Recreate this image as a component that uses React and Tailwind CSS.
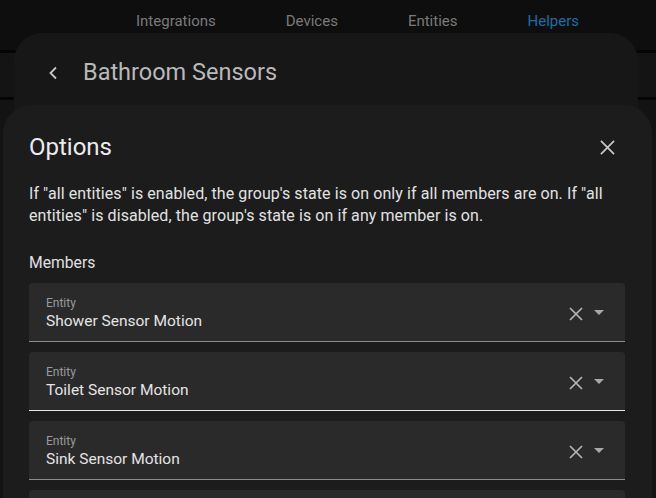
import React from "react";

const members = ["Shower Sensor Motion", "Toilet Sensor Motion", "Sink Sensor Motion"];

function EntityField({ value, active }) {
  return (
    <div
      className={`h-[59px] rounded-t-[4px] bg-[#2a2a2a] flex items-center pl-[17px] pr-[21px] border-b ${
        active ? "border-[#e8e8e8]" : "border-[#8d8d8d]"
      }`}
    >
      <div className="flex-1 flex flex-col pt-[2px]">
        <span className="text-[12px] leading-[14px] text-[#9a9a9a]">Entity</span>
        <span className="text-[15.5px] leading-[20px] text-[#e4e4e4] mt-[1px]">{value}</span>
      </div>
      <svg width="14" height="14" viewBox="0 0 14 14" className="mr-[11px] mt-[3px]">
        <path d="M1 1 L13 13 M13 1 L1 13" stroke="#b5b5b5" strokeWidth="1.7" />
      </svg>
      <svg width="10" height="5" viewBox="0 0 10 5" className="mt-[1px]">
        <path d="M0 0 L10 0 L5 5 Z" fill="#a8a8a8" />
      </svg>
    </div>
  );
}

export default function App() {
  return (
    <div className="relative w-[656px] h-[498px] overflow-hidden bg-[#131313] font-['Roboto',sans-serif]">
      {/* page behind */}
      <div className="h-[50px] bg-[#0e0e0e] flex items-start pt-[10px] text-[15px] text-[#7a7a7a]">
        <span className="ml-[136px]">Integrations</span>
        <span className="ml-[70px]">Devices</span>
        <span className="ml-[70px]">Entities</span>
        <span className="ml-[70px] text-[#1a6ea6]">Helpers</span>
      </div>
      <div className="h-[3px] bg-[#050505]" />
      <div className="h-[44px] bg-[#141414]" />
      <div className="h-[3px] bg-[#050505]" />

      {/* group dialog */}
      <div className="absolute left-[14px] right-[18px] top-[33px] bottom-0 rounded-t-[28px] bg-[#171717]">
        <div className="flex items-center h-[78px] pl-[34px] pt-[2px]">
          <svg width="10" height="14" viewBox="0 0 10 14">
            <path d="M8 1.5 L2.5 7 L8 12.5" stroke="#c8c8c8" strokeWidth="1.8" fill="none" />
          </svg>
          <span className="ml-[25px] text-[23.5px] text-[#b9b9b9]">Bathroom Sensors</span>
        </div>
      </div>

      {/* options dialog */}
      <div className="absolute left-[3px] right-[4px] top-[105px] bottom-0 rounded-t-[28px] bg-[#1c1c1c] pl-[26px] pr-[27px]">
        <div className="flex items-center justify-between h-[82px] pb-[1px]">
          <span className="text-[24px] text-[#ececec] pt-[2px]">Options</span>
          <svg width="15" height="15" viewBox="0 0 16 16" className="mr-[10px] mt-[4px]">
            <path d="M1 1 L15 15 M15 1 L1 15" stroke="#c9c9c9" strokeWidth="1.8" />
          </svg>
        </div>
        <p className="text-[16px] leading-[22px] tracking-[0.08px] text-[#e2e2e2] mt-[-4px] pr-[2px]">
          If "all entities" is enabled, the group's state is on only if all members are on. If "all
          entities" is disabled, the group's state is on if any member is on.
        </p>
        <div className="text-[15.7px] text-[#e2e2e2] mt-[26px] leading-[20px]">Members</div>
        <div className="mt-[10px] flex flex-col gap-[10px]">
          {members.map((m, i) => (
            <EntityField key={m} value={m} active={i === 1} />
          ))}
          <div className="h-[59px] rounded-t-[4px] bg-[#2a2a2a]" />
        </div>
      </div>
    </div>
  );
}
